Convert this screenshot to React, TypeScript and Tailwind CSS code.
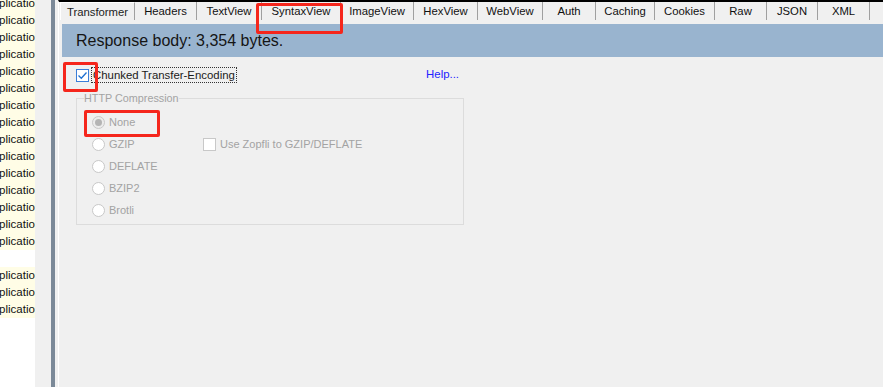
const tabs = [
  { label: "Transformer", w: 75 },
  { label: "Headers", w: 62 },
  { label: "TextView", w: 65 },
  { label: "SyntaxView", w: 79 },
  { label: "ImageView", w: 73 },
  { label: "HexView", w: 64 },
  { label: "WebView", w: 65 },
  { label: "Auth", w: 53 },
  { label: "Caching", w: 59 },
  { label: "Cookies", w: 60 },
  { label: "Raw", w: 52 },
  { label: "JSON", w: 51 },
  { label: "XML", w: 52 },
];

const rows = Array.from({ length: 22 }, (_, i) => i < 15 || (i > 15 && i < 19));

const radios = ["None", "GZIP", "DEFLATE", "BZIP2", "Brotli"];

const App = () => {
  return (
    <div className="relative flex h-[387px] w-[883px] overflow-hidden bg-[#f0f0f0] font-['Liberation_Sans',Arial,sans-serif] text-[12px] text-[#1a1a1a]">
      {/* session list, scrolled right */}
      <div className="flex w-[35px] shrink-0 flex-col overflow-hidden bg-white">
        <div className="-mt-[5px] flex flex-col">
          {rows.map((on, i) => (
            <div
              key={i}
              className={`h-[17px] overflow-hidden whitespace-nowrap leading-[17px] ${on ? "bg-[#fffde6]" : "bg-white"}`}
            >
              {on && <span className="-ml-[15px] block text-[11.5px] text-[#111]">Application/json</span>}
            </div>
          ))}
        </div>
      </div>
      <div className="w-[16px] shrink-0" />
      <div className="w-[4px] shrink-0 bg-[#7b8998]" />
      <div className="w-[3px] shrink-0" />

      {/* inspector */}
      <div className="flex min-w-0 flex-1 flex-col border-l border-t-2 border-l-white border-t-black">
        <div className="flex h-[18px] pl-[1px]">
          {tabs.map((t, i) => (
            <div
              key={t.label}
              style={{ width: t.w }}
              className={`flex shrink-0 items-center justify-center pt-[1px] text-[11.3px] ${
                i === 0
                  ? "border-l border-t border-r border-l-white border-t-white border-r-[#a0a0a0] text-[#222]"
                  : "border-r border-[#a0a0a0] text-[#111]"
              }`}
            >
              {t.label}
            </div>
          ))}
        </div>

        <div className="ml-[3px] mt-[4px] flex flex-1 flex-col">
          <div className="flex h-[33px] items-center bg-[#99b4cf] pl-[14px] pt-[1px] text-[16px] text-[#151515]">
            Response body: 3,354 bytes.
          </div>

          <div className="pl-[14px]">
            <div className="mt-[10px] flex h-[16px] w-[387px] items-center text-[11.4px]">
              <div className="flex h-[13px] w-[13px] items-center justify-center border border-[#3b7ed8] bg-white">
                <svg viewBox="0 0 11 11" className="h-[11px] w-[11px]">
                  <path d="M1.5 5.5 L4.3 8.3 L9.5 2.5" fill="none" stroke="#1e6fd0" strokeWidth="1.3" />
                </svg>
              </div>
              <span className="ml-[2px] border border-dotted border-[#333] px-[1px] leading-[14px]">
                Chunked Transfer-Encoding
              </span>
              <span className="ml-auto mr-[4px] text-[#2222ff]">Help...</span>
            </div>

            <fieldset className="mt-[8px] h-[134px] w-[388px] border border-[#dcdcdc] text-[11px] text-[#a3a3a3]">
              <legend className="ml-[7px] leading-[14px] text-[10.8px]">HTTP Compression</legend>
              <div className="flex pt-[6px] pl-[15px]">
                <div className="flex w-[111px] flex-col">
                  {radios.map((r, i) => (
                    <div key={r} className="flex h-[22px] items-center">
                      <div
                        className={`flex h-[13px] w-[13px] items-center justify-center rounded-full border border-[#c8c8c8] ${
                          i === 0 ? "bg-[#ececec]" : "bg-white"
                        }`}
                      >
                        {i === 0 && <div className="h-[7px] w-[7px] rounded-full bg-[#b4b4b4]" />}
                      </div>
                      <span className="ml-[4px]">{r}</span>
                    </div>
                  ))}
                </div>
                <div className="mt-[22px] flex h-[22px] items-center">
                  <div className="h-[13px] w-[13px] border border-[#c8c8c8] bg-white" />
                  <span className="ml-[4px]">Use Zopfli to GZIP/DEFLATE</span>
                </div>
              </div>
            </fieldset>
          </div>
        </div>
      </div>

      {/* annotation boxes */}
      <div className="absolute left-[256px] top-[3px] h-[31px] w-[87px] rounded-[2px] border-[3px] border-[#f5261c]" />
      <div className="absolute left-[63px] top-[62px] h-[30px] w-[35px] rounded-[2px] border-[3px] border-[#f5261c]" />
      <div className="absolute left-[84px] top-[110px] h-[27px] w-[76px] rounded-[2px] border-[3px] border-[#f5261c]" />
    </div>
  );
};

export default App;
